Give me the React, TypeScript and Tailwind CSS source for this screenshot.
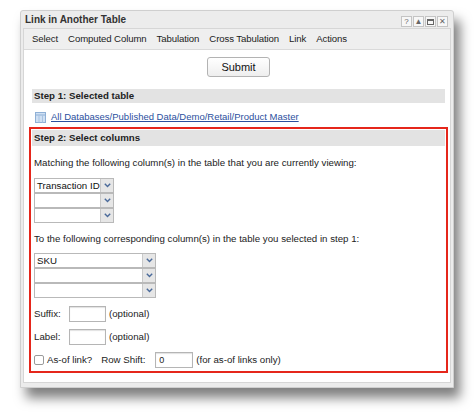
import React from 'react';

const FONT = { fontFamily: '"Liberation Sans", Arial, sans-serif' };

function TitleButton({ children }: { children: React.ReactNode }) {
  return (
    <div className="flex h-[11px] w-[11px] items-center justify-center border border-[#c4c4c4] bg-[#f7f7f7] text-[8px] leading-none text-[#666]">
      {children}
    </div>
  );
}

function SelectBox({ width, value }: { width: string; value?: string }) {
  return (
    <div className={`flex h-[15px] ${width} border border-[#b9b9b9] bg-white`}>
      <div className="flex-1 overflow-hidden whitespace-nowrap pl-[2px] text-[9.7px] leading-[13px] text-[#111]">
        {value}
      </div>
      <div className="flex w-[13px] items-center justify-center border-l border-[#c9c9c9] bg-[#e6e6e6]">
        <svg width="7" height="5" viewBox="0 0 7 5">
          <path d="M0.8 0.8 L3.5 3.6 L6.2 0.8" fill="none" stroke="#4a6a9a" strokeWidth="1.4" />
        </svg>
      </div>
    </div>
  );
}

function TextInput({ width, value }: { width: string; value?: string }) {
  return (
    <div className={`h-[16px] ${width} border border-[#b5b5b5] bg-white pl-[3px] text-[9px] leading-[14px] text-[#222] shadow-[inset_0_1px_1px_rgba(0,0,0,0.12)]`}>
      {value}
    </div>
  );
}

export default function App() {
  const menu = ['Select', 'Computed Column', 'Tabulation', 'Cross Tabulation', 'Link', 'Actions'];

  return (
    <div className="h-[416px] w-[474px] overflow-hidden bg-white pl-[20px] pt-[10px]" style={FONT}>
      <div className="flex h-[378px] w-[434px] flex-col rounded-t-[3px] border border-[#cfcfcf] bg-[#ececec] px-[2px] pb-[4px] shadow-[6px_10px_12px_rgba(0,0,0,0.5)]">
        {/* Title bar */}
        <div className="flex h-[17px] items-center justify-between pl-[2px] pr-[3px]">
          <span className="text-[10px] font-bold text-[#333]">Link in Another Table</span>
          <div className="flex gap-[1px] pt-[4px]">
            <TitleButton>?</TitleButton>
            <TitleButton>▲</TitleButton>
            <TitleButton>
              <div className="h-[6px] w-[7px] border border-t-2 border-[#666]" />
            </TitleButton>
            <TitleButton>✕</TitleButton>
          </div>
        </div>

        <div className="flex flex-1 flex-col border border-[#d6d6d6] bg-white">
          {/* Menu bar */}
          <div className="flex h-[21px] items-center gap-[10px] border-b border-[#dadada] bg-[#efefef] pl-[8px] text-[9.6px] tracking-[-0.1px] text-[#222]">
            {menu.map((m) => (
              <span key={m}>{m}</span>
            ))}
          </div>

          {/* Body */}
          <div className="flex flex-col pl-[5px] pr-[2px]">
            <div className="mt-[7px] flex justify-center">
              <div className="flex h-[20px] w-[63px] items-center justify-center rounded-[3px] border border-[#b3b3b3] bg-gradient-to-b from-white to-[#eeeeee] text-[11px] text-[#111]">
                Submit
              </div>
            </div>

            <div className="ml-[3px] mr-[3px] mt-[12px] flex h-[14px] items-center bg-[#e3e3e3] pl-[2px] text-[9.7px] font-bold text-[#222]">
              Step 1: Selected table
            </div>

            <div className="ml-[6px] mt-[8px] flex h-[12px] items-center gap-[5px]">
              <svg width="11" height="11" viewBox="0 0 11 11">
                <rect x="0.5" y="0.5" width="10" height="10" fill="#cfe0f3" stroke="#8fb0d6" />
                <line x1="0.5" y1="3" x2="10.5" y2="3" stroke="#8fb0d6" />
                <line x1="4" y1="3" x2="4" y2="10.5" stroke="#a9c3e2" />
                <line x1="7.5" y1="3" x2="7.5" y2="10.5" stroke="#a9c3e2" />
              </svg>
              <span className="text-[9.5px] text-[#2b4f9e] underline">
                All Databases/Published Data/Demo/Retail/Product Master
              </span>
            </div>

            {/* Step 2 */}
            <div className="mt-[4px] flex h-[246px] flex-col border-2 border-[#e5261b] pl-[3px] pr-[1px] text-[9.7px] text-[#222]">
              <div className="-ml-[2px] mt-[1px] flex h-[16px] items-center bg-[#e3e3e3] pl-[2px] font-bold">
                Step 2: Select columns
              </div>

              <div className="mt-[10px] h-[14px] leading-[14px]">
                Matching the following column(s) in the table that you are currently viewing:
              </div>

              <div className="mt-[8px] flex flex-col">
                <SelectBox width="w-[80px]" value="Transaction ID" />
                <SelectBox width="w-[80px]" />
                <SelectBox width="w-[80px]" />
              </div>

              <div className="mt-[9px] h-[14px] leading-[14px]">
                To the following corresponding column(s) in the table you selected in step 1:
              </div>

              <div className="mt-[7px] flex flex-col">
                <SelectBox width="w-[122px]" value="SKU" />
                <SelectBox width="w-[122px]" />
                <SelectBox width="w-[122px]" />
              </div>

              <div className="mt-[8px] flex items-center">
                <span className="w-[35px]">Suffix:</span>
                <TextInput width="w-[37px]" />
                <span className="ml-[3px]">(optional)</span>
              </div>

              <div className="mt-[7px] flex items-center">
                <span className="w-[35px]">Label:</span>
                <TextInput width="w-[37px]" />
                <span className="ml-[3px]">(optional)</span>
              </div>

              <div className="mt-[7px] flex items-center">
                <div className="h-[10px] w-[10px] rounded-[2px] border border-[#9a9a9a] bg-white" />
                <span className="ml-[3px]">As-of link?</span>
                <span className="ml-[9px] w-[54px]">Row Shift:</span>
                <TextInput width="w-[38px]" value="0" />
                <span className="ml-[3px]">(for as-of links only)</span>
              </div>
            </div>
          </div>
        </div>
      </div>
    </div>
  );
}
